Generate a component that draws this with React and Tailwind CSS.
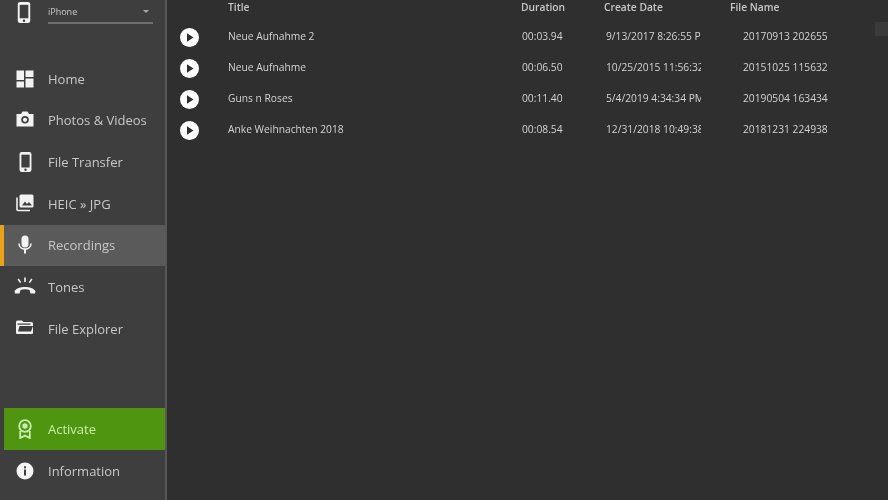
const PhoneIcon = ({ className }) => (
  <svg className={className} viewBox="0 0 16 24" fill="none">
    <rect x="1.5" y="1" width="13" height="22" rx="2.5" fill="#f2f2f2" />
    <rect x="3.5" y="4" width="9" height="14" fill="#3e3e3e" />
    <circle cx="8" cy="20.5" r="1.3" fill="#3e3e3e" />
  </svg>
);

const HomeIcon = () => (
  <svg className="h-[18px] w-[18px]" viewBox="0 0 18 18" fill="#f2f2f2">
    <rect x="0.5" y="0.5" width="7.5" height="9.5" />
    <rect x="9.5" y="0.5" width="8" height="6.5" />
    <rect x="0.5" y="11.5" width="7.5" height="6" />
    <rect x="9.5" y="8.5" width="8" height="9" />
  </svg>
);

const CameraIcon = () => (
  <svg className="-mt-[3px] h-[18px] w-[18px]" viewBox="0 0 18 18">
    <path d="M0.5 4 H5 L6.5 1.5 H11.5 L13 4 H17.5 V16.5 H0.5 Z" fill="#f2f2f2" />
    <circle cx="9" cy="9.8" r="3.8" fill="#3e3e3e" />
    <circle cx="9" cy="9.8" r="2.1" fill="#f2f2f2" />
  </svg>
);

const GalleryIcon = () => (
  <svg className="-mt-[2px] h-[19px] w-[18px]" viewBox="0 0 18 18" fill="none">
    <path d="M1 4 V16 A1 1 0 0 0 2 17 H14" stroke="#f2f2f2" strokeWidth="1.6" />
    <rect x="3.5" y="1" width="14" height="13" rx="1.5" fill="#f2f2f2" />
    <path d="M6 12 L9 8 L11 10.5 L13 8.5 L16 12 Z" fill="#3e3e3e" />
  </svg>
);

const MicIcon = () => (
  <svg className="-mt-[3px] h-[19px] w-[18px]" viewBox="0 0 18 19" fill="none">
    <rect x="5.5" y="0.5" width="7" height="12" rx="3.5" fill="#f2f2f2" />
    <path d="M3 8.5 C3 16 15 16 15 8.5" stroke="#f2f2f2" strokeWidth="1.6" />
    <rect x="8" y="14" width="2" height="4.5" fill="#f2f2f2" />
  </svg>
);

const HangupIcon = () => (
  <svg className="-mt-[2px] h-5 w-[22px]" viewBox="0 0 22 20" fill="#f2f2f2">
    <path d="M0.5 15 C4 9.5 18 9.5 21.5 15 L21 17.5 L16.5 17.5 L15.5 14 C13 13 9 13 6.5 14 L5.5 17.5 L1 17.5 Z" />
    <rect x="10.2" y="1.5" width="1.6" height="4.5" />
    <path d="M3.5 3.5 L4.8 2.6 L7.3 6.2 L6 7.1 Z" />
    <path d="M18.5 3.5 L17.2 2.6 L14.7 6.2 L16 7.1 Z" />
  </svg>
);

const FolderIcon = () => (
  <svg className="-mt-[3px] h-[18px] w-5" viewBox="0 0 20 18">
    <path d="M1 4 A1.5 1.5 0 0 1 2.5 2.5 H7 L8.5 4 H16.5 A1.5 1.5 0 0 1 18 5.5 V15 A1 1 0 0 1 17 16 H2 A1 1 0 0 1 1 15 Z" fill="#f2f2f2" />
    <path d="M4.5 8 H18 L16 13.5 H3 Z" fill="#3e3e3e" />
    <rect x="2.5" y="5.5" width="13" height="1.2" fill="#3e3e3e" />
  </svg>
);

const BadgeIcon = () => (
  <svg className="h-5 w-4" viewBox="0 0 16 20" fill="none">
    <circle cx="8" cy="7" r="5.8" stroke="#c9efb0" strokeWidth="1.8" />
    <circle cx="8" cy="7" r="2.7" fill="#c9efb0" />
    <path d="M3.2 12 V19 L8 16.6 L12.8 19 V12" stroke="#c9efb0" strokeWidth="1.8" />
  </svg>
);

const InfoIcon = () => (
  <svg className="h-[18px] w-[18px]" viewBox="0 0 18 18">
    <circle cx="9" cy="9" r="8.5" fill="#f5f5f5" />
    <rect x="8" y="7.5" width="2" height="6" fill="#3e3e3e" />
    <rect x="8" y="4.3" width="2" height="2" fill="#3e3e3e" />
  </svg>
);

const PlayButton = () => (
  <svg className="h-[19px] w-[19px]" viewBox="0 0 19 19">
    <circle cx="9.5" cy="9.5" r="9.5" fill="#ffffff" />
    <path d="M7 5.3 L13.5 9.5 L7 13.7 Z" fill="#2f2f2f" />
  </svg>
);

const navItems = [
  { label: 'Home', icon: <HomeIcon /> },
  { label: 'Photos & Videos', icon: <CameraIcon /> },
  { label: 'File Transfer', icon: <PhoneIcon className="h-[22px] w-[15px]" /> },
  { label: 'HEIC » JPG', icon: <GalleryIcon /> },
  { label: 'Recordings', icon: <MicIcon />, active: true },
  { label: 'Tones', icon: <HangupIcon /> },
  { label: 'File Explorer', icon: <FolderIcon /> },
];

const recordings = [
  { title: 'Neue Aufnahme 2', duration: '00:03.94', date: '9/13/2017 8:26:55 PM', file: '20170913 202655' },
  { title: 'Neue Aufnahme', duration: '00:06.50', date: '10/25/2015 11:56:32 AM', file: '20151025 115632' },
  { title: 'Guns n Roses', duration: '00:11.40', date: '5/4/2019 4:34:34 PM', file: '20190504 163434' },
  { title: 'Anke Weihnachten 2018', duration: '00:08.54', date: '12/31/2018 10:49:38 PM', file: '20181231 224938' },
];

const NavRow = ({ item }) => (
  <div
    className={`flex h-[41.7px] items-center border-l-4 ${
      item.active ? 'border-[#eba313] bg-[#5a5a5a]' : 'border-transparent'
    }`}
  >
    <div className="flex w-11 justify-center pr-[2px]">{item.icon}</div>
    <span className="pt-px text-[13px] text-[#c8c8c8]">{item.label}</span>
  </div>
);

const App = () => {
  return (
    <div className="flex h-[500px] w-[888px] overflow-hidden bg-[#2f2f2f] font-['Open_Sans',sans-serif] blur-[0.6px]">
      <aside className="flex w-[167px] shrink-0 flex-col border-r-2 border-[#565656] bg-[#3e3e3e]">
        <div className="flex h-[58px] items-start pt-[1px]">
          <div className="flex w-12 justify-center pr-[1px]">
            <PhoneIcon className="h-[23px] w-[16px]" />
          </div>
          <div className="flex h-[23px] w-[105px] items-center justify-between border-b-2 border-[#6f6f6f] pr-1">
            <span className="text-[9px] text-[#c9c9c9]">iPhone</span>
            <span className="h-0 w-0 border-x-[3px] border-t-[3px] border-x-transparent border-t-[#a8a8a8]" />
          </div>
        </div>
        <nav className="flex flex-col">
          {navItems.map((item) => (
            <NavRow key={item.label} item={item} />
          ))}
        </nav>
        <div className="mt-auto mb-2 flex flex-col">
          <div className="flex h-[42px] items-center border-l-4 border-[#3e3e3e] bg-[#4f9510]">
            <div className="flex w-11 justify-center pr-[2px]">
              <BadgeIcon />
            </div>
            <span className="pt-px text-[13px] text-[#c9efb0]">Activate</span>
          </div>
          <NavRow item={{ label: 'Information', icon: <InfoIcon /> }} />
        </div>
      </aside>

      <main className="relative min-w-0 flex-1 text-[10.25px] text-[#d4d4d4]">
        <div className="grid h-[12px] grid-cols-[61px_293px_83px_126px_1fr] items-center font-semibold text-[#c8c8c8]">
          <span />
          <span>Title</span>
          <span>Duration</span>
          <span>Create Date</span>
          <span>File Name</span>
        </div>
        <div className="mt-[9px] flex flex-col">
          {recordings.map((row) => (
            <div
              key={row.file}
              className="grid h-[31px] grid-cols-[61px_294px_84px_137px_1fr] items-center"
            >
              <span className="flex justify-start pt-[2px] pl-[13px]">
                <PlayButton />
              </span>
              <span>{row.title}</span>
              <span>{row.duration}</span>
              <span className="w-[95px] overflow-hidden whitespace-nowrap">{row.date}</span>
              <span>{row.file}</span>
            </div>
          ))}
        </div>
        <div className="absolute top-[22px] right-0 h-[14px] w-[13px] bg-[#3b3b3b]" />
      </main>
    </div>
  );
};

export default App;
